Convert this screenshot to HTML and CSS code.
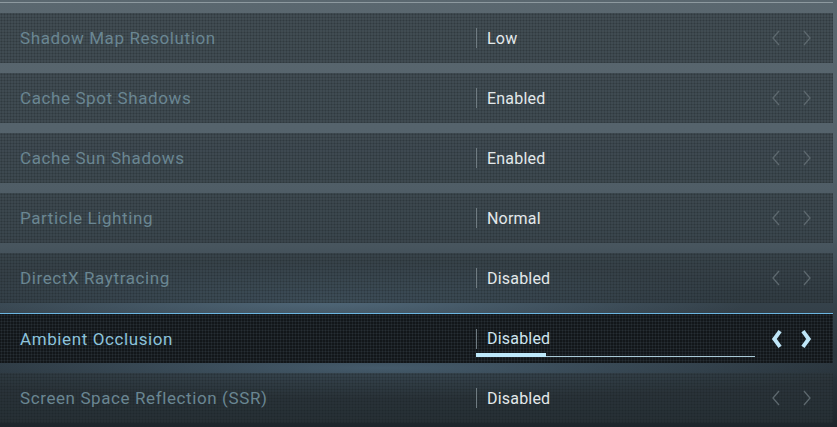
FILE: index.html
```html
<!DOCTYPE html>
<html lang="en">
<head>
    <meta charset="UTF-8">
    <meta name="viewport" content="width=device-width, initial-scale=1.0">
    <title>Graphics Settings</title>
    <link rel="stylesheet" href="styles.css">
</head>
<body>
    <div id="settings">
        <div class="top-rule"></div>
        <div class="setting-list">
            <div class="setting">
                <div class="setting-name">Shadow Map Resolution</div>
                <div class="setting-value"><span>Low</span></div>
                <div class="arrows">
                    <svg viewBox="0 0 10 18"><path d="M8 2 L2 9 L8 16"/></svg>
                    <svg viewBox="0 0 10 18"><path d="M2 2 L8 9 L2 16"/></svg>
                </div>
            </div>
            <div class="setting">
                <div class="setting-name">Cache Spot Shadows</div>
                <div class="setting-value"><span>Enabled</span></div>
                <div class="arrows">
                    <svg viewBox="0 0 10 18"><path d="M8 2 L2 9 L8 16"/></svg>
                    <svg viewBox="0 0 10 18"><path d="M2 2 L8 9 L2 16"/></svg>
                </div>
            </div>
            <div class="setting">
                <div class="setting-name">Cache Sun Shadows</div>
                <div class="setting-value"><span>Enabled</span></div>
                <div class="arrows">
                    <svg viewBox="0 0 10 18"><path d="M8 2 L2 9 L8 16"/></svg>
                    <svg viewBox="0 0 10 18"><path d="M2 2 L8 9 L2 16"/></svg>
                </div>
            </div>
            <div class="setting">
                <div class="setting-name">Particle Lighting</div>
                <div class="setting-value"><span>Normal</span></div>
                <div class="arrows">
                    <svg viewBox="0 0 10 18"><path d="M8 2 L2 9 L8 16"/></svg>
                    <svg viewBox="0 0 10 18"><path d="M2 2 L8 9 L2 16"/></svg>
                </div>
            </div>
            <div class="setting">
                <div class="setting-name">DirectX Raytracing</div>
                <div class="setting-value"><span>Disabled</span></div>
                <div class="arrows">
                    <svg viewBox="0 0 10 18"><path d="M8 2 L2 9 L8 16"/></svg>
                    <svg viewBox="0 0 10 18"><path d="M2 2 L8 9 L2 16"/></svg>
                </div>
            </div>
            <div class="setting selected">
                <div class="setting-name">Ambient Occlusion</div>
                <div class="setting-value">
                    <span>Disabled</span>
                    <div class="track"><div class="track-fill"></div></div>
                </div>
                <div class="arrows">
                    <svg viewBox="0 0 10 18"><path d="M7.5 2.5 L2.8 9 L7.5 15.5"/></svg>
                    <svg viewBox="0 0 10 18"><path d="M2.5 2.5 L7.2 9 L2.5 15.5"/></svg>
                </div>
            </div>
            <div class="setting">
                <div class="setting-name">Screen Space Reflection (SSR)</div>
                <div class="setting-value"><span>Disabled</span></div>
                <div class="arrows">
                    <svg viewBox="0 0 10 18"><path d="M8 2 L2 9 L8 16"/></svg>
                    <svg viewBox="0 0 10 18"><path d="M2 2 L8 9 L2 16"/></svg>
                </div>
            </div>
        </div>
    </div>
</body>
</html>
```

FILE: styles.css
```css
* {
    box-sizing: border-box;
    margin: 0;
    padding: 0;
}

body {
    font-family: Roboto, 'Liberation Sans', sans-serif;
    width: 837px;
    height: 427px;
    overflow: hidden;
    background:
        radial-gradient(ellipse 420px 40px at 330px 300px, rgba(120,160,190,0.4), transparent),
        radial-gradient(ellipse 500px 30px at 380px 368px, rgba(110,150,180,0.4), transparent),
        linear-gradient(180deg, #5a676f 0%, #55636c 30%, #4b5962 55%, #36434c 70%, #1e262c 100%);
}

#settings {
    width: 833px;
}

.top-rule {
    height: 1px;
    margin-top: 2px;
    background: #8d999f;
}

.setting-list {
    display: flex;
    flex-direction: column;
    gap: 10px;
    padding-top: 10px;
}

.setting {
    height: 50px;
    display: flex;
    align-items: center;
    background-color: rgba(46, 54, 60, 0.55);
    background-image: radial-gradient(rgba(20, 26, 30, 0.35) 0.8px, transparent 1.2px);
    background-size: 3px 3px;
}

.setting-name {
    width: 476px;
    padding-left: 20px;
    font-size: 17px;
    letter-spacing: 0.6px;
    color: #6a8692;
}

.setting-value {
    position: relative;
    width: 279px;
    height: 20px;
    border-left: 1px solid #6f7b81;
    padding-left: 10px;
    display: flex;
    align-items: center;
}

.setting-value span {
    font-size: 16px;
    letter-spacing: 0.2px;
    color: #e3e9eb;
}

.arrows {
    display: flex;
    gap: 21px;
    margin-left: 16px;
}

.arrows svg {
    width: 10px;
    height: 18px;
    fill: none;
    stroke: #5d686e;
    stroke-width: 1.3;
}

.selected {
    background-color: #121619;
    background-image: radial-gradient(rgba(60, 70, 78, 0.5) 0.8px, transparent 1.2px);
    border-top: 1px solid #6cb6e2;
}

.selected .setting-name {
    color: #8cc3db;
}

.selected .setting-value span {
    color: #cfe5ef;
}

.track {
    position: absolute;
    left: -1px;
    right: 0;
    bottom: -8px;
    height: 1px;
    background: #a9c9d6;
}

.track-fill {
    position: absolute;
    left: 0;
    bottom: 0;
    width: 70px;
    height: 4px;
    background: #bde8fa;
}

.selected .arrows {
    gap: 15px;
    margin-left: 15px;
}

.selected .arrows svg {
    width: 14px;
    height: 22px;
    stroke: #bfe6f8;
    stroke-width: 3.2;
}
```
